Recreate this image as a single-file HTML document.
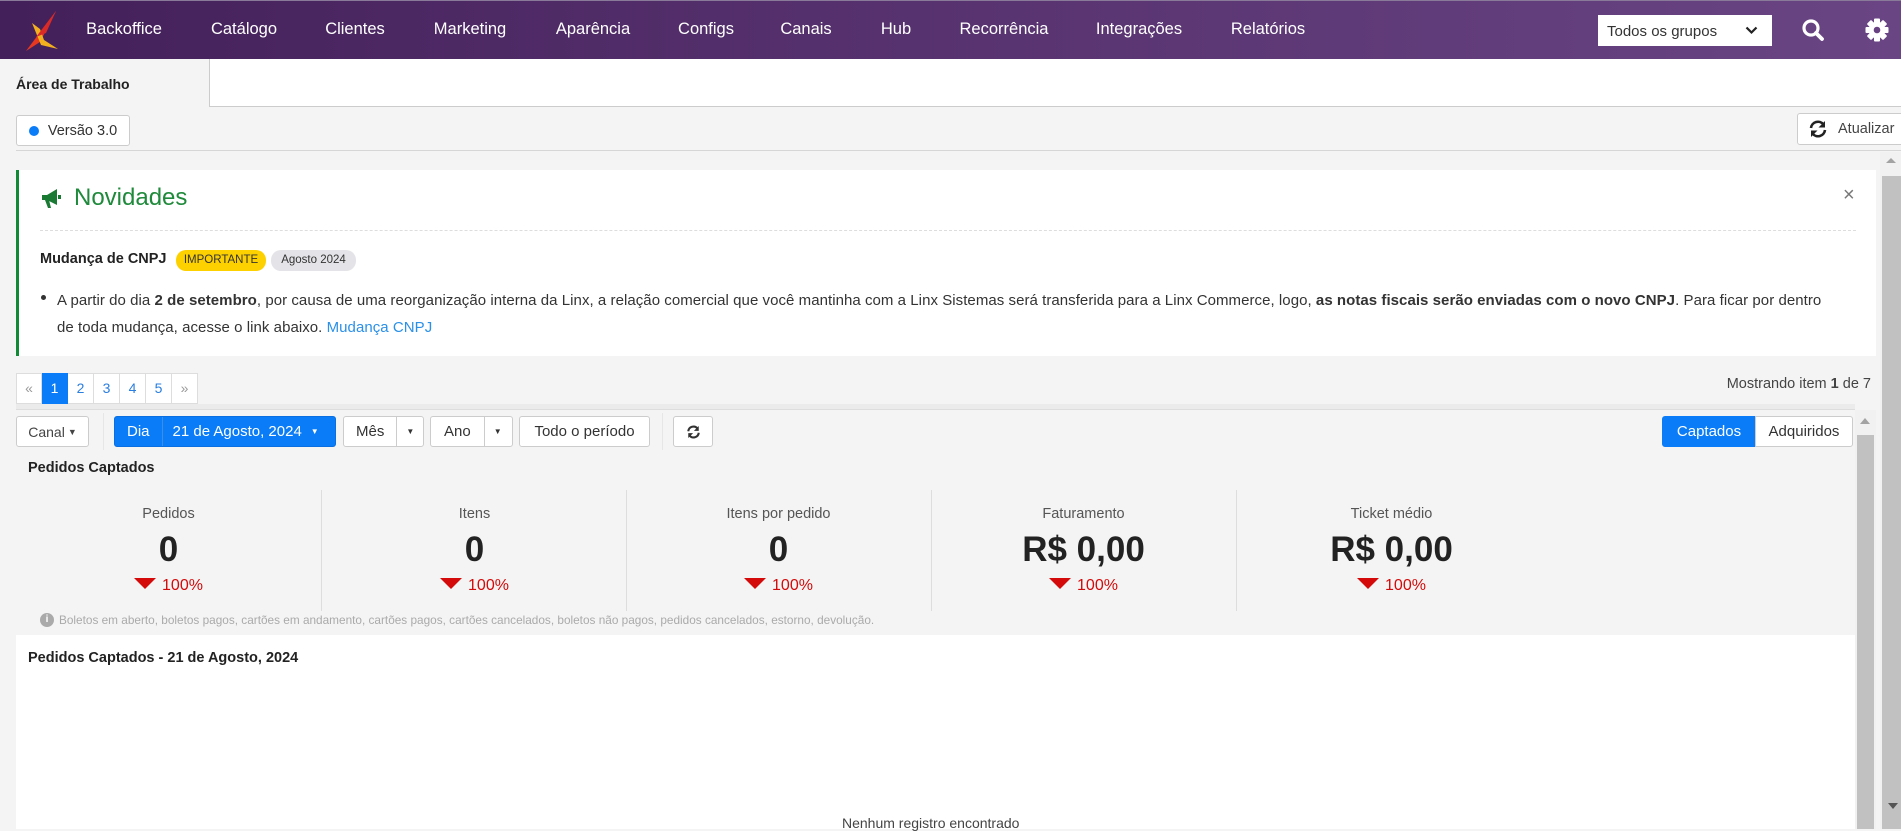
<!DOCTYPE html>
<html><head><meta charset="utf-8"><style>
*{box-sizing:border-box;margin:0;padding:0}
body{width:1901px;height:829px;overflow:hidden;background:#f4f4f4;font-family:"Liberation Sans",sans-serif;color:#333;position:relative}
.a{position:absolute}
.nav{left:0;top:0;width:1901px;height:59px;background:linear-gradient(90deg,#44205a,#6a4584);border-top:1px solid #8a7a9a}
.ni{position:absolute;top:19px;color:#fff;font-size:16.5px;transform:translateX(-50%);white-space:nowrap}
.btn{position:absolute;background:#fff;border:1px solid #ccc;border-radius:3px;font-size:15px;display:flex;align-items:center;justify-content:center;white-space:nowrap}
.stat{position:absolute;top:490px;width:305px;height:121px;text-align:center}
.stat .l{position:absolute;top:16px;width:100%;font-size:14.5px;color:#555}
.stat .v{position:absolute;top:40px;width:100%;font-size:35px;font-weight:bold;color:#222}
.stat .p{position:absolute;top:87px;width:100%;font-size:16px;color:#d40a0a}
.tri{display:inline-block;width:0;height:0;border-left:11px solid transparent;border-right:11px solid transparent;border-top:11px solid #d40a0a;margin-right:6px;vertical-align:1px}
.sep{position:absolute;top:490px;width:1px;height:121px;background:#ddd}
.pg{position:absolute;top:373px;height:31px;width:26px;border:1px solid #ddd;border-left:none;background:#fff;color:#2a7ee0;font-size:14px;text-align:center;line-height:29px}
</style></head><body>
<div class="a nav">
<svg class="a" style="left:20px;top:8px" width="42" height="44" viewBox="0 0 42 44"><path d="M36 2 L6 42 L20 33 Z" fill="#e8381f"/><path d="M12 14 L20 20 L24 31 L38 40 L21 36 Z" fill="#f2b01e"/><path d="M36 2 L16 28 L26 24 Z" fill="#d92a28"/></svg>
<span class="ni" style="left:124px">Backoffice</span>
<span class="ni" style="left:244px">Catálogo</span>
<span class="ni" style="left:355px">Clientes</span>
<span class="ni" style="left:470px">Marketing</span>
<span class="ni" style="left:593px">Aparência</span>
<span class="ni" style="left:706px">Configs</span>
<span class="ni" style="left:806px">Canais</span>
<span class="ni" style="left:896px">Hub</span>
<span class="ni" style="left:1004px">Recorrência</span>
<span class="ni" style="left:1139px">Integrações</span>
<span class="ni" style="left:1268px">Relatórios</span>
<div class="a" style="left:1598px;top:14px;width:174px;height:31px;background:#fff;font-size:15px;padding:8px 0 0 9px;color:#333">Todos os grupos
<svg class="a" style="right:14px;top:11px" width="13" height="9" viewBox="0 0 13 9"><path d="M1.5 1.5 L6.5 6.5 L11.5 1.5" stroke="#222" stroke-width="2.2" fill="none"/></svg></div>
<svg class="a" style="left:1801px;top:17px" width="24" height="24" viewBox="0 0 24 24"><circle cx="10" cy="10" r="7" stroke="#fff" stroke-width="3.2" fill="none"/><path d="M15 15 L21 21" stroke="#fff" stroke-width="3.8" stroke-linecap="round"/></svg>
<svg class="a" style="left:1865px;top:17px" width="24" height="24" viewBox="0 0 24 24"><g fill="#fff" transform="translate(12 12)"><rect x="-3" y="-11.5" width="6" height="23" rx="1"/><rect x="-3" y="-11.5" width="6" height="23" rx="1" transform="rotate(45)"/><rect x="-3" y="-11.5" width="6" height="23" rx="1" transform="rotate(90)"/><rect x="-3" y="-11.5" width="6" height="23" rx="1" transform="rotate(135)"/><circle r="8.3"/></g><circle cx="12" cy="12" r="3.3" fill="#674181"/></svg>
</div>
<div class="a" style="left:0;top:59px;width:209px;height:48px;background:#f4f4f4;font-size:14px;font-weight:bold;padding:17px 0 0 16px;color:#222">Área de Trabalho</div>
<div class="a" style="left:209px;top:59px;width:1692px;height:48px;background:#fff;border-left:1px solid #ccc;border-bottom:1px solid #ccc"></div>
<div class="btn" style="left:16px;top:115px;width:114px;height:31px;font-size:14.5px"><span style="width:10px;height:10px;border-radius:50%;background:#0a7cf7;margin-right:9px"></span>Versão 3.0</div>
<div class="btn" style="left:1797px;top:113px;width:110px;height:32px;font-size:14.5px;justify-content:flex-start;padding-left:10px;color:#444">
<svg width="20" height="18" viewBox="0 0 20 18" style="margin-right:10px"><path d="M3 8 A7 7 0 0 1 15.5 4.5" stroke="#222" stroke-width="2.6" fill="none"/><path d="M17 1 L17 7.5 L10.5 7.5 Z" fill="#222"/><path d="M17 10 A7 7 0 0 1 4.5 13.5" stroke="#222" stroke-width="2.6" fill="none"/><path d="M3 17 L3 10.5 L9.5 10.5 Z" fill="#222"/></svg>Atualizar</div>
<div class="a" style="left:16px;top:150px;width:1885px;height:1px;background:#d6d6d6"></div>
<div class="a" style="left:1880px;top:152px;width:21px;height:677px;background:#f1f1f1"></div>
<div class="a" style="left:1882px;top:176px;width:19px;height:653px;background:#c1c1c1"></div>
<div class="a" style="left:1886px;top:158px;width:0;height:0;border-left:5px solid transparent;border-right:5px solid transparent;border-bottom:5px solid #a3a3a3"></div>
<div class="a" style="left:16px;top:170px;width:1860px;height:186px;background:#fff;border-left:3px solid #118a35"></div>
<svg class="a" style="left:40px;top:188px" width="22" height="21" viewBox="0 0 22 21"><path d="M2 7 L7 7 L17 1 L17 17 L7 12 L2 12 Z" fill="#1a7a33"/><path d="M5 12 L8 20 L11 20 L9 12 Z" fill="#1a7a33"/><rect x="18" y="7" width="3" height="4" fill="#1a7a33"/></svg>
<div class="a" style="left:74px;top:184px;font-size:24px;color:#1f8a3b">Novidades</div>
<div class="a" style="left:1843px;top:184px;font-size:20px;color:#777">×</div>
<div class="a" style="left:40px;top:230px;width:1816px;border-top:1px dashed #ddd"></div>
<div class="a" style="left:40px;top:251px;font-size:14.5px;font-weight:bold;color:#222">Mudança de CNPJ</div>
<div class="a" style="left:176px;top:250px;height:21px;width:90px;border-radius:10px;background:#fdd000;font-size:11.5px;color:#333;text-align:center;line-height:21px">IMPORTANTE</div>
<div class="a" style="left:271px;top:250px;height:21px;width:85px;border-radius:10px;background:#e4e4e8;font-size:11.5px;color:#333;text-align:center;line-height:21px">Agosto 2024</div>
<div class="a" style="left:41px;top:295px;width:5px;height:5px;border-radius:50%;background:#333"></div>
<div class="a" style="left:57px;top:287px;font-size:15px;line-height:27px;color:#333;white-space:nowrap;letter-spacing:0.05px">A partir do dia <b>2 de setembro</b>, por causa de uma reorganização interna da Linx, a relação comercial que você mantinha com a Linx Sistemas será transferida para a Linx Commerce, logo, <b>as notas fiscais serão enviadas com o novo CNPJ</b>. Para ficar por dentro<br>de toda mudança, acesse o link abaixo. <span style="color:#2a90e8">Mudança CNPJ</span></div>
<div class="pg" style="left:16px;border-left:1px solid #ddd;color:#999">«</div>
<div class="pg" style="left:42px;background:#0a7cf7;color:#fff;border-color:#0a7cf7">1</div>
<div class="pg" style="left:68px">2</div>
<div class="pg" style="left:94px">3</div>
<div class="pg" style="left:120px">4</div>
<div class="pg" style="left:146px">5</div>
<div class="pg" style="left:172px;color:#999">»</div>
<div class="a" style="right:30px;top:376px;font-size:14.5px;color:#444">Mostrando item <b>1</b> de 7</div>
<div class="a" style="left:16px;top:404px;width:1839px;height:6px;background:#ebebeb;border-bottom:1px solid #ddd"></div>
<div class="a" style="left:1855px;top:410px;width:21px;height:419px;background:#f1f1f1"></div>
<div class="a" style="left:1857px;top:435px;width:17px;height:394px;background:#c1c1c1"></div>
<div class="a" style="left:1860px;top:418px;width:0;height:0;border-left:5px solid transparent;border-right:5px solid transparent;border-bottom:6px solid #a3a3a3"></div>
<div class="a" style="left:1888px;top:803px;width:0;height:0;border-left:5px solid transparent;border-right:5px solid transparent;border-top:6px solid #555"></div>
<div class="btn" style="left:16px;top:416px;width:73px;height:31px;font-size:14px;color:#444">Canal<span style="font-size:9px;margin-left:3px">▼</span></div>
<div class="a" style="left:103px;top:413px;width:1px;height:37px;background:#e6e6e6"></div>
<div class="btn" style="left:114px;top:416px;width:222px;height:31px;background:#0a7cf7;border-color:#0a6fe0;color:#fff;justify-content:flex-start;font-size:15px"><span style="padding:0 12px 0 12px;border-right:1px solid #3a8ee8;line-height:29px">Dia</span><span style="padding-left:10px">21 de Agosto, 2024</span><span style="font-size:8px;margin-left:9px">▼</span></div>
<div class="btn" style="left:343px;top:416px;width:81px;height:31px;justify-content:flex-start"><span style="padding:0 12px;border-right:1px solid #ccc;line-height:29px">Mês</span><span style="font-size:8px;margin-left:9px">▼</span></div>
<div class="btn" style="left:430px;top:416px;width:83px;height:31px;justify-content:flex-start"><span style="padding:0 13px;border-right:1px solid #ccc;line-height:29px">Ano</span><span style="font-size:8px;margin-left:9px">▼</span></div>
<div class="btn" style="left:519px;top:416px;width:131px;height:31px">Todo o período</div>
<div class="a" style="left:662px;top:413px;width:1px;height:37px;background:#e6e6e6"></div>
<div class="btn" style="left:673px;top:416px;width:40px;height:31px"><svg width="15" height="14" viewBox="0 0 20 18"><path d="M3 8 A7 7 0 0 1 15.5 4.5" stroke="#333" stroke-width="2.8" fill="none"/><path d="M17 1 L17 7.5 L10.5 7.5 Z" fill="#333"/><path d="M17 10 A7 7 0 0 1 4.5 13.5" stroke="#333" stroke-width="2.8" fill="none"/><path d="M3 17 L3 10.5 L9.5 10.5 Z" fill="#333"/></svg></div>
<div class="btn" style="left:1662px;top:416px;width:94px;height:31px;background:#0a7cf7;border-color:#0a7cf7;color:#fff;border-radius:3px 0 0 3px">Captados</div>
<div class="btn" style="left:1755px;top:416px;width:98px;height:31px;border-radius:0 3px 3px 0">Adquiridos</div>
<div class="a" style="left:28px;top:460px;font-size:14.5px;font-weight:bold;color:#222">Pedidos Captados</div>
<div class="stat" style="left:16px"><div class="l">Pedidos</div><div class="v">0</div><div class="p"><span class="tri"></span>100%</div></div>
<div class="sep" style="left:321px"></div>
<div class="stat" style="left:322px"><div class="l">Itens</div><div class="v">0</div><div class="p"><span class="tri"></span>100%</div></div>
<div class="sep" style="left:626px"></div>
<div class="stat" style="left:626px"><div class="l">Itens por pedido</div><div class="v">0</div><div class="p"><span class="tri"></span>100%</div></div>
<div class="sep" style="left:931px"></div>
<div class="stat" style="left:931px"><div class="l">Faturamento</div><div class="v">R$ 0,00</div><div class="p"><span class="tri"></span>100%</div></div>
<div class="sep" style="left:1236px"></div>
<div class="stat" style="left:1239px"><div class="l">Ticket médio</div><div class="v">R$ 0,00</div><div class="p"><span class="tri"></span>100%</div></div>
<div class="a" style="left:40px;top:613px;width:14px;height:14px;border-radius:50%;background:#aaa;color:#fff;font-size:10px;font-weight:bold;text-align:center;line-height:14px">i</div>
<div class="a" style="left:59px;top:613px;font-size:11.8px;color:#aaa">Boletos em aberto, boletos pagos, cartões em andamento, cartões pagos, cartões cancelados, boletos não pagos, pedidos cancelados, estorno, devolução.</div>
<div class="a" style="left:16px;top:635px;width:1839px;height:194px;background:#fff"></div>
<div class="a" style="left:28px;top:650px;font-size:14.5px;font-weight:bold;color:#222">Pedidos Captados - 21 de Agosto, 2024</div>
<div class="a" style="left:842px;top:815px;font-size:14px;color:#444">Nenhum registro encontrado</div>
</body></html>
